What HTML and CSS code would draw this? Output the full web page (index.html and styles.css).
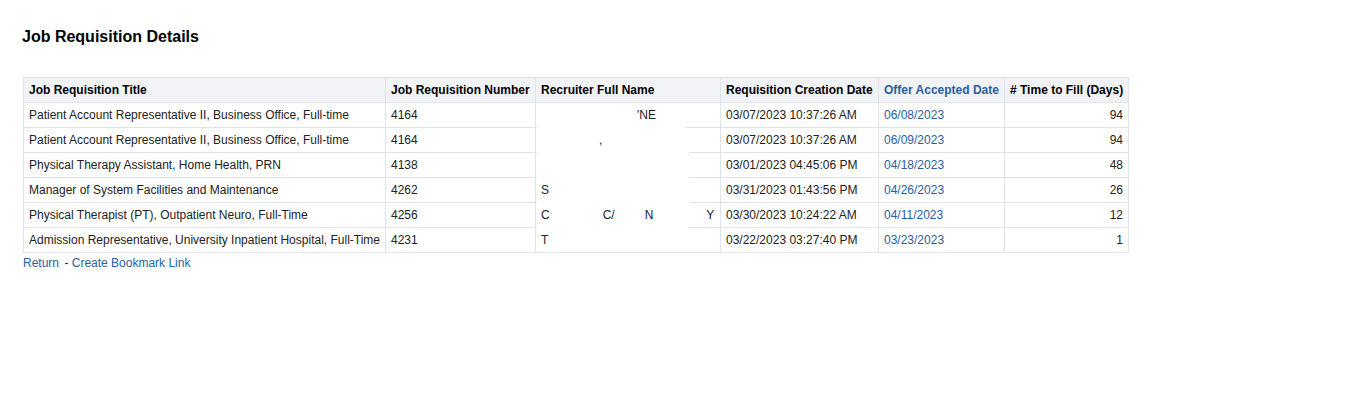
FILE: index.html
```html
<!DOCTYPE html>
<html>
<head>
<meta charset="utf-8">
<link rel="stylesheet" href="styles.css">
</head>
<body>
<div class="page">
  <h1 class="title">Job Requisition Details</h1>
  <div class="table-wrap">
    <table class="grid">
      <colgroup>
        <col class="c1"><col class="c2"><col class="c3"><col class="c4"><col class="c5"><col class="c6">
      </colgroup>
      <thead>
        <tr>
          <th>Job Requisition Title</th>
          <th>Job Requisition Number</th>
          <th>Recruiter Full Name</th>
          <th>Requisition Creation Date</th>
          <th class="link">Offer Accepted Date</th>
          <th># Time to Fill (Days)</th>
        </tr>
      </thead>
      <tbody>
        <tr>
          <td>Patient Account Representative II, Business Office, Full-time</td>
          <td>4164</td>
          <td><span class="frag f-ne">'NE</span></td>
          <td>03/07/2023 10:37:26 AM</td>
          <td class="link">06/08/2023</td>
          <td class="num">94</td>
        </tr>
        <tr>
          <td>Patient Account Representative II, Business Office, Full-time</td>
          <td>4164</td>
          <td><span class="frag f-comma">,</span></td>
          <td>03/07/2023 10:37:26 AM</td>
          <td class="link">06/09/2023</td>
          <td class="num">94</td>
        </tr>
        <tr>
          <td>Physical Therapy Assistant, Home Health, PRN</td>
          <td>4138</td>
          <td></td>
          <td>03/01/2023 04:45:06 PM</td>
          <td class="link">04/18/2023</td>
          <td class="num">48</td>
        </tr>
        <tr>
          <td>Manager of System Facilities and Maintenance</td>
          <td>4262</td>
          <td><span class="frag">S</span></td>
          <td>03/31/2023 01:43:56 PM</td>
          <td class="link">04/26/2023</td>
          <td class="num">26</td>
        </tr>
        <tr>
          <td>Physical Therapist (PT), Outpatient Neuro, Full-Time</td>
          <td>4256</td>
          <td class="frags"><span>C</span><span>C/</span><span>N</span><span>Y</span></td>
          <td>03/30/2023 10:24:22 AM</td>
          <td class="link">04/11/2023</td>
          <td class="num">12</td>
        </tr>
        <tr>
          <td>Admission Representative, University Inpatient Hospital, Full-Time</td>
          <td>4231</td>
          <td><span class="frag">T</span></td>
          <td>03/22/2023 03:27:40 PM</td>
          <td class="link">03/23/2023</td>
          <td class="num">1</td>
        </tr>
      </tbody>
    </table>
    <div class="redact"></div>
  </div>
  <div class="links">
    <a class="lnk">Return</a>
    <span class="sep">-</span>
    <a class="lnk">Create Bookmark Link</a>
  </div>
</div>
</body>
</html>
```

FILE: styles.css
```css
html, body {
  margin: 0;
  padding: 0;
  background: #ffffff;
}
body {
  font-family: "Liberation Sans", Arial, sans-serif;
  font-size: 12px;
  color: #222222;
}
.page {
  padding: 27px 0 0 23px;
}
.title {
  margin: 0 0 0 -1px;
  font-size: 16px;
  font-weight: bold;
  color: #000000;
  line-height: 19px;
}
.table-wrap {
  position: relative;
  margin-top: 31px;
  width: 1105px;
}
.grid {
  border-collapse: collapse;
  table-layout: fixed;
  width: 1105px;
}
.c1 { width: 362px; }
.c2 { width: 150px; }
.c3 { width: 185px; }
.c4 { width: 158px; }
.c5 { width: 126px; }
.c6 { width: 124px; }
.grid th, .grid td {
  border: 1px solid #dfe3ea;
  height: 24px;
  padding: 0 5px;
  text-align: left;
  white-space: nowrap;
  overflow: hidden;
  vertical-align: middle;
}
.grid th {
  background: #f2f3f7;
  font-weight: bold;
  color: #000000;
  border-top-color: #d8dde5;
}
.grid th.link {
  color: #2a5ea0;
}
.grid td.link {
  color: #2a5ea0;
}
.grid td.num, .grid th.num {
  text-align: right;
}
.frag {
  display: inline-block;
  position: relative;
  z-index: 2;
}
.f-ne { padding-left: 96px; }
.f-comma { padding-left: 58px; }
.frags span {
  display: inline-block;
  position: relative;
  z-index: 2;
}
.frags span:nth-child(2) { margin-left: 53px; }
.frags span:nth-child(3) { margin-left: 30px; }
.frags span:nth-child(4) { margin-left: 53px; }
.redact {
  position: absolute;
  left: 514px;
  top: 26px;
  width: 152px;
  height: 148px;
  background: #ffffff;
  border-radius: 14px 40px 30px 20px;
  z-index: 1;
  pointer-events: none;
}
.links {
  margin-top: 3px;
  color: #2a5ea0;
  line-height: 14px;
}
.lnk {
  color: #2a5ea0;
  text-decoration: none;
}
.sep {
  color: #222222;
  margin: 0 0 0 2px;
}
```
